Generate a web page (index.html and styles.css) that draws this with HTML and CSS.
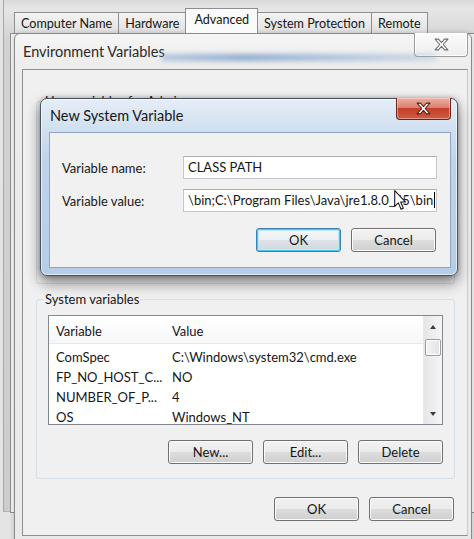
FILE: index.html
```html
<!DOCTYPE html>
<html lang="en">
<head>
    <meta charset="UTF-8">
    <meta name="viewport" content="width=device-width, initial-scale=1.0">
    <title>Environment Variables</title>
    <link rel="stylesheet" href="styles.css">
</head>
<body>
    <div class="desktop">
        <!-- System Properties window in the background -->
        <div class="sysprops">
            <div class="tabs">
                <div class="tab">Computer Name</div>
                <div class="tab">Hardware</div>
                <div class="tab tab-active">Advanced</div>
                <div class="tab">System Protection</div>
                <div class="tab">Remote</div>
            </div>
            <div class="tab-page"></div>
        </div>

        <!-- Environment Variables dialog (inactive) -->
        <div class="window env">
            <div class="titlebar">
                <span class="title">Environment Variables</span>
                <span class="glass-blur"></span>
                <button class="close close-inactive">
                    <svg viewBox="0 0 14 12" width="15" height="13"><polygon points="1,1 4.2,1 7,4.3 9.8,1 13,1 8.6,6 13,11 9.8,11 7,7.7 4.2,11 1,11 5.4,6" fill="#fbfbfb" stroke="#6f6f6f" stroke-width="1" stroke-linejoin="round"/></svg>
                </button>
            </div>
            <div class="env-client">
                <!-- user group sits under the New System Variable dialog -->
                <fieldset class="group group-user">
                    <legend>User variables for Admin</legend>
                </fieldset>

                <fieldset class="group group-system">
                    <legend>System variables</legend>
                    <div class="listview">
                        <div class="list-body">
                            <div class="list-head"><span class="col-name">Variable</span><span class="col-value">Value</span></div>
                            <div class="list-rows">
                                <div class="list-row"><span class="col-name">ComSpec</span><span class="col-value">C:\Windows\system32\cmd.exe</span></div>
                                <div class="list-row"><span class="col-name">FP_NO_HOST_C...</span><span class="col-value">NO</span></div>
                                <div class="list-row"><span class="col-name">NUMBER_OF_P...</span><span class="col-value">4</span></div>
                                <div class="list-row"><span class="col-name">OS</span><span class="col-value">Windows_NT</span></div>
                            </div>
                        </div>
                        <div class="scrollbar">
                            <div class="sb-btn"><span class="arrow arrow-up"></span></div>
                            <div class="sb-thumb"></div>
                            <div class="sb-track"></div>
                            <div class="sb-btn sb-btn-down"><span class="arrow arrow-down"></span></div>
                        </div>
                    </div>
                    <div class="btn-row">
                        <button class="btn">New...</button>
                        <button class="btn">Edit...</button>
                        <button class="btn">Delete</button>
                    </div>
                </fieldset>

                <div class="btn-row dialog-buttons">
                    <button class="btn">OK</button>
                    <button class="btn">Cancel</button>
                </div>
            </div>
        </div>

        <!-- New System Variable dialog (active, on top) -->
        <div class="window newvar">
            <div class="titlebar">
                <span class="title">New System Variable</span>
                <button class="close close-active">
                    <svg viewBox="0 0 14 12" width="15" height="13"><polygon points="1,1 4.2,1 7,4.3 9.8,1 13,1 8.6,6 13,11 9.8,11 7,7.7 4.2,11 1,11 5.4,6" fill="#fff" stroke="#5a1c12" stroke-width="1" stroke-linejoin="round"/></svg>
                </button>
            </div>
            <div class="newvar-client">
                <div class="form">
                    <label class="form-label">Variable name:</label>
                    <div class="textbox">CLASS PATH</div>
                    <label class="form-label">Variable value:</label>
                    <div class="textbox"><span class="caret">\bin;C:\Program Files\Java\jre1.8.0_45\bin</span></div>
                    <div class="btn-row form-buttons">
                        <button class="btn btn-default">OK</button>
                        <button class="btn">Cancel</button>
                    </div>
                </div>
            </div>
        </div>

        <svg class="pointer" viewBox="0 0 12 20" width="13" height="21"><path d="M0.5 0.5 V15.6 L4 12.3 L6.5 18.4 L8.7 17.4 L6.2 11.5 H10.9 Z" fill="#fff" stroke="#111" stroke-width="1" stroke-linejoin="round"/></svg>
    </div>
</body>
</html>
```

FILE: styles.css
```css
body {
    margin: 0;
    font-family: Lato, "Open Sans", sans-serif;
    font-size: 13px;
    color: #161616;
}
.desktop {
    position: relative;
    width: 474px;
    height: 539px;
    overflow: hidden;
    background: #e4e4e4;
}

/* background window */
.sysprops {
    position: absolute;
    left: 3px;
    top: 0;
    width: 490px;
    height: 512px;
    box-sizing: border-box;
    padding: 8px 0 0 6px;
    border-left: 1px solid #a6a6a6;
    border-bottom: 1px solid #b4b4b4;
    background: linear-gradient(#d9d9d9, #e6e6e6 9px, #d2d2d2 40px, #cdcdcd);
}
.tabs {
    display: flex;
    align-items: flex-end;
    height: 25px;
    padding-left: 4px;
}
.tab {
    height: 20px;
    line-height: 21px;
    padding: 0 6px;
    margin-right: -1px;
    border: 1px solid #8c8e94;
    border-bottom: none;
    background: linear-gradient(#f3f3f3, #e1e1e1);
    font-size: 12.6px;
    white-space: nowrap;
}
.tab-active {
    position: relative;
    z-index: 1;
    height: 24px;
    line-height: 21px;
    padding: 0 8px;
    background: #fafafa;
}
.tab-page {
    height: 478px;
    border: 1px solid #8c8e94;
    border-right: none;
    background: #f5f5f5;
}

/* dialog frames */
.window {
    position: absolute;
    box-sizing: border-box;
}
.titlebar {
    position: relative;
    display: flex;
    align-items: center;
}
.title {
    font-size: 14.5px;
    white-space: nowrap;
}
.close {
    align-self: flex-start;
    margin: -1px 0 0 auto;
    height: 22px;
    padding: 0;
    display: flex;
    align-items: center;
    justify-content: center;
    border-radius: 0 0 4px 4px;
}

.env {
    left: 14px;
    top: 33px;
    width: 458px;
    height: 512px;
    border: 1px solid #8a8a8a;
    border-radius: 6px 6px 0 0;
    background: linear-gradient(#f5f5f5, #ececec 36px, #e9e9e9);
    box-shadow: 0 0 5px rgba(0, 0, 0, 0.2);
}
.env .titlebar {
    height: 35px;
    padding-left: 8px;
}
.env .title {
    color: #2a2a2a;
}
.glass-blur {
    position: absolute;
    left: 146px;
    top: 20px;
    width: 276px;
    height: 7px;
    border-radius: 4px;
    background: linear-gradient(90deg, rgba(110, 150, 200, 0.45), rgba(90, 135, 190, 0.65) 30%, rgba(120, 160, 205, 0.5) 70%, rgba(140, 170, 210, 0.3));
    filter: blur(2.5px);
}
.close-inactive {
    width: 54px;
    height: 24px;
    margin-right: 3px;
    border: 1px solid #9c9c9c;
    border-top: none;
    background: linear-gradient(#fbfbfb, #eeeeee);
    box-shadow: inset 0 0 0 1px #fff;
}
.env-client {
    height: 467px;
    margin: 0 3px 0 7px;
    padding: 22px 12px 0 13px;
    box-sizing: border-box;
    border: 1px solid #8f8f8f;
    border-right-color: #c9c9c9;
    border-bottom-color: #8f8f8f;
    background: #f0f0f0;
}

/* group boxes */
.group {
    margin: 0;
    min-width: 0;
    padding: 0 11px 14px;
    border: 1px solid #d5dfe5;
    border-radius: 3px;
}
.group-user {
    height: 192px;
    box-sizing: border-box;
}
.group-system {
    margin-top: 6px;
}
.group legend {
    margin-left: -4px;
    padding: 0 1px;
    line-height: 18px;
}

/* list view */
.listview {
    display: flex;
    height: 110px;
    margin-top: 7px;
    box-sizing: border-box;
    border: 1px solid #828790;
    background: #fff;
    overflow: hidden;
}
.list-body {
    flex: 1;
    overflow: hidden;
}
.list-head {
    display: flex;
    align-items: center;
    height: 28px;
    padding-top: 2px;
    box-sizing: border-box;
    border-bottom: 1px solid #e6e8ec;
    background: linear-gradient(#ffffff, #f6f7f9);
}
.list-rows {
    padding-top: 3px;
}
.list-row {
    display: flex;
    height: 20px;
    line-height: 20px;
}
.col-name,
.col-value {
    box-sizing: border-box;
    padding-left: 7px;
    white-space: nowrap;
}
.col-name {
    flex: none;
    width: 116px;
}
.scrollbar {
    display: flex;
    flex-direction: column;
    width: 18px;
    border-left: 1px solid #e8e8e8;
    background: linear-gradient(90deg, #e6e6e6, #f5f5f5);
}
.sb-btn {
    display: flex;
    align-items: center;
    justify-content: center;
    height: 22px;
}
.sb-btn-down {
    height: 20px;
}
.arrow {
    width: 0;
    height: 0;
    border-left: 3.5px solid transparent;
    border-right: 3.5px solid transparent;
}
.arrow-up {
    border-bottom: 4px solid #3c3c3c;
}
.arrow-down {
    border-top: 4px solid #3c3c3c;
}
.sb-thumb {
    height: 17px;
    margin: 1px 1px 0;
    box-sizing: border-box;
    border: 1px solid #9b9b9b;
    border-radius: 2px;
    background: linear-gradient(90deg, #f4f4f4, #e3e3e3);
    box-shadow: inset 0 0 0 1px #fff;
}
.sb-track {
    flex: 1;
}

/* buttons */
.btn-row {
    display: flex;
    justify-content: flex-end;
    gap: 10px;
    margin-top: 15px;
}
.dialog-buttons {
    margin: 18px 1px 0 0;
}
.btn {
    width: 85px;
    height: 24px;
    padding: 0;
    border: 1px solid #707070;
    border-radius: 3px;
    background: linear-gradient(#f2f2f2, #ebebeb 50%, #dddddd 50%, #cfcfcf);
    box-shadow: inset 0 0 0 1px #fbfbfb;
    font: inherit;
    color: #161616;
}
.btn-default {
    border-color: #3c7fb1;
    box-shadow: inset 0 0 0 1px #48c8f5, inset 0 0 0 2px #bde8f9;
    background: linear-gradient(#f4f7f9, #ecf0f2 50%, #dde3e6 50%, #d1d8db);
}

/* new variable dialog */
.newvar {
    left: 40px;
    top: 98px;
    width: 418px;
    height: 178px;
    border: 1px solid #47525e;
    border-radius: 7px;
    background: linear-gradient(#e6eef7, #d2e1f1 28px, #bfd4eb 60px, #b6cde7);
    box-shadow: 0 7px 14px rgba(0, 0, 0, 0.45), 0 0 5px rgba(0, 0, 0, 0.3), inset 0 0 0 1px rgba(255, 255, 255, 0.6);
}
.newvar .titlebar {
    height: 33px;
    padding-left: 9px;
}
.close-active {
    width: 55px;
    margin-right: 6px;
    border: 1px solid #6b241a;
    border-top: none;
    background: linear-gradient(#eab1a3, #d98270 45%, #c4412b 50%, #cf5a43);
    box-shadow: inset 0 0 0 1px rgba(255, 220, 210, 0.5);
}
.newvar-client {
    height: 136px;
    margin: 0 6px 0 8px;
    box-sizing: border-box;
    border: 1px solid #8ea6c2;
    background: #f1f1f1;
}
.form {
    display: grid;
    grid-template-columns: 121px 1fr;
    align-items: center;
    row-gap: 10px;
    padding: 23px 13px 0 12px;
}
.textbox {
    height: 23px;
    line-height: 21px;
    padding-left: 4px;
    box-sizing: border-box;
    border: 1px solid #c3c6cc;
    border-top-color: #abadb3;
    background: #fff;
    white-space: nowrap;
    overflow: hidden;
}
.caret {
    padding-right: 1px;
    border-right: 1px solid #000;
}
.form-buttons {
    grid-column: 1 / -1;
    margin-top: 6px;
    padding-right: 1px;
}

.pointer {
    position: absolute;
    left: 394px;
    top: 190px;
}
```
